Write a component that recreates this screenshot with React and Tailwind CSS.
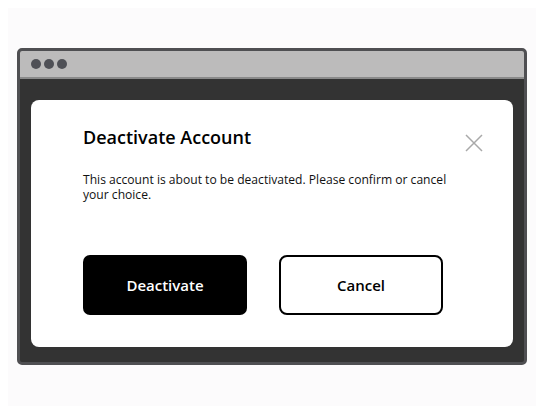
import React from "react";

const App = () => {
    return (
        <div className="w-[544px] h-[414px] bg-white p-2" style={{ fontFamily: '"Open Sans", "Noto Sans", sans-serif' }}>
            <div className="w-full h-full bg-[#fcfbfc] pt-10 px-[9px]">
                <div className="h-[317px] rounded-[5px] border-[3px] border-[#4f4f52] bg-[#333333] flex flex-col overflow-hidden">
                    <div className="h-[28px] bg-[#bcbbbb] border-b-2 border-[#8a8a8a] flex items-center gap-[3px] pl-[11px]">
                        <span className="w-[10px] h-[10px] rounded-full bg-[#4f5056]" />
                        <span className="w-[10px] h-[10px] rounded-full bg-[#4f5056]" />
                        <span className="w-[10px] h-[10px] rounded-full bg-[#4f5056]" />
                    </div>
                    <div className="flex-1 px-[11px] pt-[21px] pb-[15px]">
                        <div className="h-full bg-white rounded-[8px] pl-[52px] pr-[28px] pt-[25px] flex flex-col">
                            <div className="flex items-start justify-between">
                                <h1 className="text-[18px] font-semibold text-black leading-[24px]">Deactivate Account</h1>
                                <svg width="20" height="20" viewBox="0 0 20 20" className="mt-[8px] mr-[1px]">
                                    <path d="M2 2 L18 18 M18 2 L2 18" stroke="#a9a9a9" strokeWidth="1.5" fill="none" />
                                </svg>
                            </div>
                            <p className="mt-[19px] text-[12.1px] leading-[15px] text-[#111] w-[372px]">
                                This account is about to be deactivated. Please confirm or cancel your choice.
                            </p>
                            <div className="mt-[53px] flex gap-[32px]">
                                <button className="w-[164px] h-[60px] bg-black text-white rounded-[7px] text-[15px] font-semibold">Deactivate</button>
                                <button className="w-[164px] h-[60px] bg-white text-black border-[2.5px] border-black rounded-[8px] text-[15px] font-semibold">Cancel</button>
                            </div>
                        </div>
                    </div>
                </div>
            </div>
        </div>
    );
};

export default App;
